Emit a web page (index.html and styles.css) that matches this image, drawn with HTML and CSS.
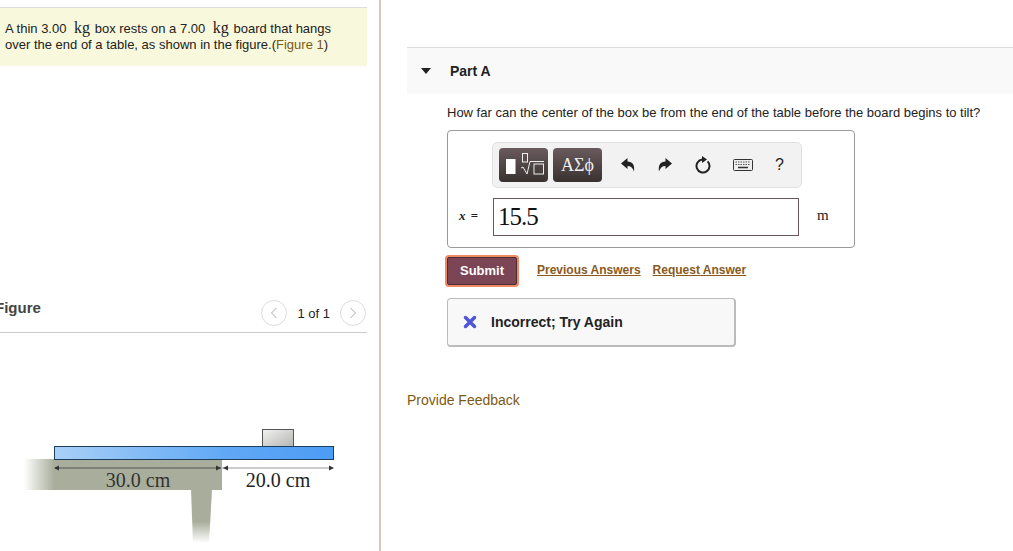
FILE: index.html
```html
<!DOCTYPE html>
<html>
<head>
    <meta charset="UTF-8">
    <meta name="viewport" content="width=device-width, initial-scale=1.0">
    <title>Part A</title>
    <link rel="stylesheet" href="styles.css">
</head>

<body>
    <div class="page">
        <div class="left-pane">
            <div class="problem">
                <p>A thin 3.00 <span class="unit">kg</span> box rests on a 7.00 <span class="unit">kg</span> board that hangs</p>
                <p>over the end of a table, as shown in the figure.(<a class="link" href="#">Figure 1</a>)</p>
            </div>

            <div class="figure-head">
                <h2>Figure</h2>
                <div class="pager">
                    <span class="pager-btn">
                        <svg width="8" height="12" viewBox="0 0 8 12"><path d="M6.5 1 L1.5 6 L6.5 11" fill="none" stroke="#aaa" stroke-width="1"/></svg>
                    </span>
                    <span class="pager-text">1 of 1</span>
                    <span class="pager-btn">
                        <svg width="8" height="12" viewBox="0 0 8 12"><path d="M1.5 1 L6.5 6 L1.5 11" fill="none" stroke="#aaa" stroke-width="1"/></svg>
                    </span>
                </div>
            </div>

            <svg class="diagram" width="379" height="218" viewBox="0 0 379 218">
                <defs>
                    <linearGradient id="board" x1="0" x2="1" y1="0" y2="0">
                        <stop offset="0" stop-color="#a9d0f7"/>
                        <stop offset="0.6" stop-color="#62a9f5"/>
                        <stop offset="1" stop-color="#4c9cf5"/>
                    </linearGradient>
                    <linearGradient id="box" x1="0" x2="1" y1="0" y2="1">
                        <stop offset="0" stop-color="#f2f2f0"/>
                        <stop offset="1" stop-color="#b4b4b2"/>
                    </linearGradient>
                    <linearGradient id="tableLeft" x1="0" x2="1" y1="0" y2="0">
                        <stop offset="0" stop-color="#a9ae9c" stop-opacity="0"/>
                        <stop offset="1" stop-color="#a9ae9c"/>
                    </linearGradient>
                    <linearGradient id="tableLeg" x1="0" x2="0" y1="0" y2="1">
                        <stop offset="0.6" stop-color="#a9ae9c"/>
                        <stop offset="1" stop-color="#a9ae9c" stop-opacity="0"/>
                    </linearGradient>
                </defs>
                <rect x="24" y="127" width="30" height="31" fill="url(#tableLeft)"/>
                <rect x="54" y="127" width="168" height="31" fill="#a9ae9c"/>
                <path d="M191 158 H212 L209 211 H193 Z" fill="url(#tableLeg)"/>
                <rect x="262.500" y="97.500" width="31" height="17" fill="url(#box)" stroke="#555"/>
                <rect x="54.500" y="114.500" width="279" height="13" fill="url(#board)" stroke="#1d3f5e"/>
                <path d="M55 136 H221" stroke="#555" stroke-width="1"/>
                <path d="M222 136 H333" stroke="#999" stroke-width="1"/>
                <path d="M54 136 L59 133.500 V138.500 Z M221 136 L216 133.500 V138.500 Z M223 136 L228 133.500 V138.500 Z M334 136 L329 133.500 V138.500 Z" fill="#333"/>
                <text x="138" y="155" class="dim" fill="#333">30.0 cm</text>
                <text x="278" y="155" class="dim" fill="#222">20.0 cm</text>
            </svg>
        </div>

        <div class="right-pane">
            <div class="part-head">
                <svg class="caret" width="10" height="6" viewBox="0 0 10 6"><path d="M0 0 H10 L5 6 Z" fill="#222"/></svg>
                <h3>Part A</h3>
            </div>

            <div class="part-body">
                <p class="question">How far can the center of the box be from the end of the table before the board begins to tilt?</p>

                <div class="answer-box">
                    <div class="toolbar">
                        <span class="tool-btn">
                            <svg width="42" height="28" viewBox="0 0 42 28">
                                <rect x="3" y="8" width="9.500" height="15" fill="#fff"/>
                                <rect x="19.500" y="2.500" width="5" height="8.500" fill="none" stroke="#eee"/>
                                <path d="M18 17 L20 16 L24 23 L27 10.500 H41" fill="none" stroke="#eee"/>
                                <rect x="31" y="13" width="9.500" height="10" fill="none" stroke="#eee"/>
                            </svg>
                        </span>
                        <span class="tool-btn greek">ΑΣϕ</span>
                        <span class="tool-icons">
                            <svg width="16" height="16" viewBox="0 0 16 16"><path d="M1 6.500 L7.500 1 V4.500 C12.500 4.500 15 8 14 14.500 C13 11 11 9 7.500 9 V12 Z" fill="#222"/></svg>
                            <svg width="16" height="16" viewBox="0 0 16 16"><path d="M15 6.500 L8.500 1 V4.500 C3.500 4.500 1 8 2 14.500 C3 11 5 9 8.500 9 V12 Z" fill="#222"/></svg>
                            <svg width="18" height="18" viewBox="0 0 18 18"><path d="M13.600 5.400 A6.500 6.500 0 1 1 8 3.600" fill="none" stroke="#222" stroke-width="2"/><path d="M8 0 L13 3.500 L8 7 Z" fill="#222"/></svg>
                            <svg width="20" height="12" viewBox="0 0 20 12"><rect x="0.500" y="0.500" width="19" height="11" rx="1" fill="#eee" stroke="#333"/><path d="M2.500 3 H17.500 M2.500 5.500 H17.500" stroke="#555" stroke-dasharray="1.500 1"/><path d="M5 8.500 H15" stroke="#333" stroke-width="1.500"/></svg>
                            <span class="help">?</span>
                        </span>
                    </div>

                    <div class="answer-row">
                        <span class="var"><i>x</i> =</span>
                        <div class="answer-input">15.5</div>
                        <span class="answer-unit">m</span>
                    </div>
                </div>

                <div class="actions">
                    <button class="submit">Submit</button>
                    <a class="action-link" href="#">Previous Answers</a>
                    <a class="action-link" href="#">Request Answer</a>
                </div>

                <div class="feedback-box">
                    <svg width="14" height="14" viewBox="0 0 14 14"><path d="M2.500 2.500 L11.500 11.500 M11.500 2.500 L2.500 11.500" stroke="#4f55d8" stroke-width="3.500" stroke-linecap="round"/></svg>
                    <span>Incorrect; Try Again</span>
                </div>
            </div>

            <a class="provide" href="#">Provide Feedback</a>
        </div>
    </div>
</body>
</html>
```

FILE: styles.css
```css
html, body {
    margin: 0;
    padding: 0;
    background-color: #fff;
}

body {
    font-family: "Liberation Sans", Arial, sans-serif;
    color: #222;
    overflow: hidden;
}

.page {
    display: flex;
    width: 1013px;
    height: 551px;
    overflow: hidden;
}

/* left side */
.left-pane {
    width: 379px;
    height: 551px;
    flex-shrink: 0;
    border-right: 2px solid #d5c7ba;
    margin-right: 26px;
}

.problem {
    width: 367px;
    height: 58px;
    margin-top: 7px;
    border-top: 1px solid #ddd;
    background-color: #f8f8dd;
    font-size: 13px;
    overflow: hidden;
}

.problem p {
    margin: 0;
    padding-left: 5px;
    line-height: 16px;
    white-space: nowrap;
}

.problem p:first-child {
    margin-top: 12px;
}

.unit {
    font-family: "Liberation Serif", serif;
    font-size: 16px;
    margin: 0 1px 0 4px;
}

.link {
    color: #7c5a12;
    text-decoration: none;
}

.figure-head {
    display: flex;
    justify-content: space-between;
    align-items: flex-end;
    width: 367px;
    height: 46px;
    margin-top: 221px;
    padding: 0 1px 6px 0;
    box-sizing: border-box;
    border-bottom: 1px solid #ccc;
}

.figure-head h2 {
    margin: 0 0 10px -5px;
    font-size: 15px;
    line-height: 16px;
    color: #444;
}

.pager {
    display: flex;
    align-items: center;
    gap: 10px;
}

.pager-btn {
    display: flex;
    align-items: center;
    justify-content: center;
    width: 26px;
    height: 26px;
    border: 1px solid #ddd;
    border-radius: 50%;
    box-sizing: border-box;
    background-color: #fff;
}

.pager-text {
    font-size: 13px;
}

.diagram {
    display: block;
    margin-top: -1px;
}

.dim {
    font-family: "Liberation Serif", serif;
    font-size: 20px;
    text-anchor: middle;
}

/* right side */
.right-pane {
    flex: 1;
    min-width: 0;
}

.part-head {
    display: flex;
    align-items: center;
    height: 46px;
    margin-top: 47px;
    border-top: 1px solid #ddd;
    background-color: #f9f9f9;
}

.caret {
    margin-left: 14px;
}

.part-head h3 {
    margin: 0 0 0 19px;
    font-size: 14px;
}

.part-body {
    padding-left: 40px;
}

.question {
    margin: 11px 0 9px;
    font-size: 13px;
    line-height: 16px;
    white-space: nowrap;
}

.answer-box {
    width: 408px;
    height: 118px;
    border: 1px solid #999;
    border-radius: 4px;
    box-sizing: border-box;
    padding-top: 11px;
}

.toolbar {
    display: flex;
    align-items: center;
    width: 310px;
    height: 46px;
    margin-left: 44px;
    padding-left: 6px;
    box-sizing: border-box;
    background-color: #f2f2f2;
    border: 1px solid #e0e0e0;
    border-radius: 5px;
}

.tool-btn {
    display: flex;
    align-items: center;
    justify-content: center;
    width: 49px;
    height: 34px;
    margin-right: 5px;
    border-radius: 4px;
    background: linear-gradient(#6a5a5e, #38322f);
    color: #eee;
}

.greek {
    font-family: "Liberation Serif", "DejaVu Serif", serif;
    font-size: 18px;
}

.tool-icons {
    display: flex;
    align-items: center;
    margin-left: 13px;
    gap: 21px;
}

.help {
    font-size: 16px;
    margin-left: 1px;
}

.answer-row {
    display: flex;
    align-items: center;
    margin-top: 10px;
}

.var {
    width: 45px;
    padding: 0 0 2px 11px;
    box-sizing: border-box;
    font-family: "Liberation Serif", serif;
    font-size: 13px;
    font-weight: bold;
    word-spacing: 2px;
    white-space: nowrap;
}

.answer-input {
    width: 306px;
    height: 38px;
    margin-right: 18px;
    padding-left: 4px;
    box-sizing: border-box;
    border: 1px solid #6d5560;
    font-family: "Liberation Serif", serif;
    font-size: 25px;
    letter-spacing: -1px;
    line-height: 36px;
    color: #111;
}

.answer-unit {
    padding-bottom: 3px;
    font-family: "Liberation Serif", serif;
    font-size: 15px;
}

.actions {
    display: flex;
    align-items: center;
    gap: 12px;
    margin-top: 9px;
}

.submit {
    width: 70px;
    height: 28px;
    margin-right: 8px;
    padding: 0 0 1px;
    border: 1px solid #4a2c35;
    border-radius: 2px;
    box-shadow: 0 0 0 2px #f08a65;
    background-color: #7b4555;
    color: #fff;
    font-family: "Liberation Sans", Arial, sans-serif;
    font-size: 13px;
    font-weight: bold;
}

.action-link {
    padding-bottom: 2px;
    color: #8a5a1c;
    font-size: 12px;
    font-weight: bold;
}

.feedback-box {
    display: flex;
    align-items: center;
    gap: 14px;
    width: 289px;
    height: 49px;
    margin-top: 13px;
    padding-left: 15px;
    box-sizing: border-box;
    background-color: #f8f8f8;
    border: 1px solid #bbb;
    border-bottom-width: 2px;
    border-right-width: 2px;
    border-radius: 4px;
    font-size: 14px;
    font-weight: bold;
}

.provide {
    display: block;
    margin-top: 45px;
    color: #7c5a12;
    font-size: 14px;
    text-decoration: none;
}
```
